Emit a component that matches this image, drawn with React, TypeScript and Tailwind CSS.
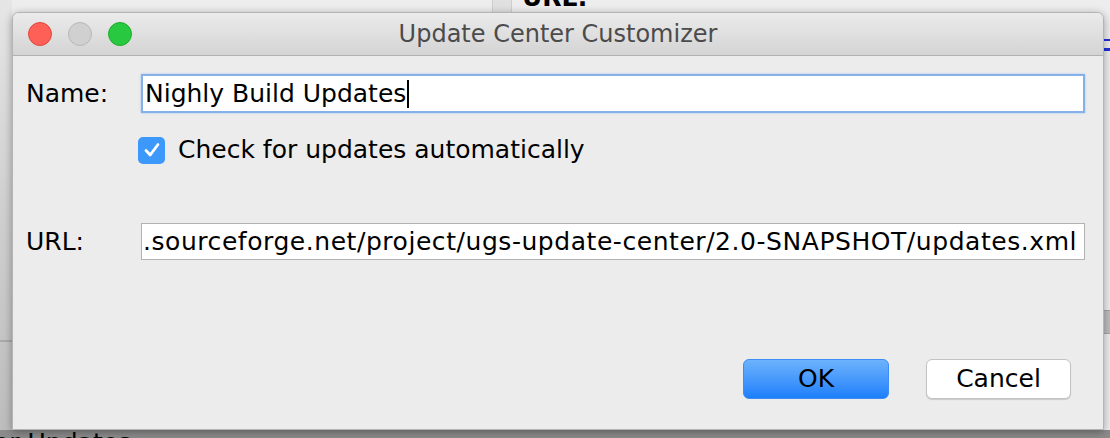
import React from "react";

export default function App() {
  const font = { fontFamily: '"DejaVu Sans", "Liberation Sans", sans-serif' };
  return (
    <div
      className="relative w-[1110px] h-[438px] overflow-hidden bg-[#ededed]"
      style={font}
    >
      {/* background window pieces */}
      <div className="absolute left-0 top-0 w-[12px] h-[430px] bg-gradient-to-b from-[#e6e6e6] via-[#cfcfcf] to-[#bdbdbd]">
        <div className="mt-[340px] h-[2px] bg-[#a9a9a9]" />
      </div>
      <div className="absolute left-[492px] top-0 w-[20px] h-[12px] bg-[#e0e0e0] border-x border-[#cfcfcf]" />
      <div className="absolute left-[522px] top-[-16px] text-[25px] font-bold text-black leading-[28px]">
        URL:
      </div>
      <div className="absolute left-[1104px] top-[39px] w-[6px] h-[2px] bg-[#1d2ee0]" />
      <div className="absolute left-[1104px] top-[48px] w-[6px] h-[3px] bg-[#1d2ee0]" />
      <div className="absolute left-[1104px] top-[310px] w-[6px] h-[24px] bg-[#bdbdbd] border-y border-[#a5a5a5]" />
      <div className="absolute left-0 top-[430px] w-[1110px] h-[8px] bg-[#8b8b8b]">
        <div className="absolute left-[-6px] top-[-2px] text-[25px] leading-[30px] text-black whitespace-nowrap">
          or Updates
        </div>
      </div>

      {/* dialog */}
      <div className="absolute left-[12px] top-[12px] w-[1092px] h-[418px] flex flex-col rounded-t-[7px] border border-[#b4b4b4] bg-[#ececec] shadow-[0_2px_8px_rgba(0,0,0,0.35)] overflow-hidden">
        <div className="relative h-[43px] shrink-0 flex items-center bg-gradient-to-b from-[#ebebeb] to-[#d4d4d4] border-b border-[#b1b1b1]">
          <div className="flex items-center gap-[16px] pl-[15px]">
            <div className="w-[24px] h-[24px] rounded-full bg-[#fe5f57] border border-[#e2463f]" />
            <div className="w-[24px] h-[24px] rounded-full bg-[#d0d0d0] border border-[#b8b8b8]" />
            <div className="w-[24px] h-[24px] rounded-full bg-[#28c840] border border-[#1dad2b]" />
          </div>
          <div className="absolute inset-0 flex items-center justify-center text-[24px] text-[#4b4b4b]">
            Update Center Customizer
          </div>
        </div>

        <div className="flex flex-col pl-[12px] pr-[18px] pt-[18px]">
          <div className="flex items-center h-[39px]">
            <div className="w-[116px] shrink-0 pl-[1px] text-[25px] text-black">Name:</div>
            <div className="flex-1 h-[39px] bg-white border-2 border-[#86b1e8] shadow-[0_0_2px_#9fc3f0] flex items-center pl-[2px] text-[25px] text-black whitespace-nowrap">
              Nighly Build Updates
              <span className="inline-block w-[2px] h-[28px] bg-black ml-[1px]" />
            </div>
          </div>

          <div className="flex items-center mt-[23px] ml-[113px] h-[28px] gap-[13px]">
            <div className="w-[27px] h-[27px] rounded-[5px] bg-[#3c98fb] flex items-center justify-center">
              <svg width="20" height="20" viewBox="0 0 20 20">
                <path d="M4 10.5 L8.2 15 L16 4.5" fill="none" stroke="white" strokeWidth="2.8" strokeLinecap="round" strokeLinejoin="round" />
              </svg>
            </div>
            <div className="text-[25px] text-black whitespace-nowrap">Check for updates automatically</div>
          </div>

          <div className="flex items-center h-[37px] mt-[59px]">
            <div className="w-[116px] shrink-0 pl-[1px] text-[25px] text-black">URL:</div>
            <div className="flex-1 h-[37px] bg-white border border-[#b2b2b2] flex items-center pl-[1px] text-[25px] tracking-[0.55px] text-black whitespace-nowrap overflow-hidden">
              .sourceforge.net/project/ugs-update-center/2.0-SNAPSHOT/updates.xml
            </div>
          </div>
        </div>

        <div className="flex justify-end gap-[37px] pr-[32px] mt-[99px]">
          <div className="w-[146px] h-[40px] rounded-[6px] bg-gradient-to-b from-[#6cb2fc] to-[#1a7ffb] border border-[#3b8cf5] flex items-center justify-center text-[25px] text-black">
            OK
          </div>
          <div className="w-[145px] h-[40px] rounded-[6px] bg-white border border-[#c3c3c3] shadow-[0_1px_1px_rgba(0,0,0,0.15)] flex items-center justify-center text-[25px] text-black">
            Cancel
          </div>
        </div>
      </div>
    </div>
  );
}
